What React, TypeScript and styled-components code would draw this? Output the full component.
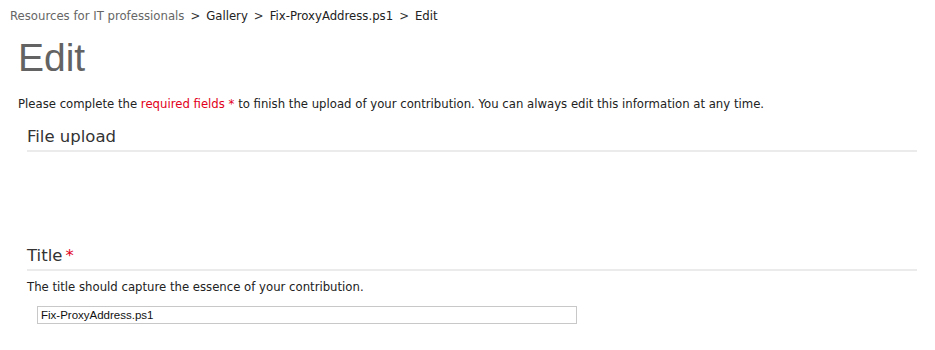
import React from "react";
import styled, { createGlobalStyle } from "styled-components";

const Global = createGlobalStyle`
  html, body { margin: 0; padding: 0; background: #fff; }
  body { font-family: "DejaVu Sans", "Liberation Sans", sans-serif; color: #222; }
`;

const Breadcrumb = styled.nav`
  display: flex;
  align-items: baseline;
  padding: 9px 0 0 10px;
  font-size: 11.7px;
  line-height: 14px;
  color: #222;
`;

const Crumb = styled.a<{ $muted?: boolean }>`
  color: ${(p) => (p.$muted ? "#666" : "#222")};
  text-decoration: none;
`;

const Sep = styled.span`
  padding: 0 6px;
  color: #333;
`;

const Main = styled.main`
  padding: 0 18px;
`;

const Heading = styled.h1`
  margin: 11px 0 0;
  font-family: "Liberation Sans", Arial, sans-serif;
  font-size: 39px;
  line-height: 48px;
  font-weight: normal;
  color: #636363;
`;

const Intro = styled.p`
  margin: 15px 0 0;
  font-size: 11.7px;
  line-height: 14px;
  color: #222;
`;

const Required = styled.span`
  color: #e2001a;
`;

const Section = styled.section<{ $gap?: number }>`
  margin: ${(p) => p.$gap ?? 0}px 0 0 9px;
`;

const SectionTitle = styled.h2`
  margin: 0;
  padding-bottom: 3px;
  font-size: 16.5px;
  line-height: 20px;
  font-weight: normal;
  color: #333;
  border-bottom: 2px solid #ebebeb;
`;

const Star = styled.span`
  color: #e2001a;
  margin-left: 3px;
`;

const Help = styled.p`
  margin: 9px 0 0;
  font-size: 11.7px;
  line-height: 14px;
  color: #222;
`;

const Input = styled.input`
  display: block;
  box-sizing: border-box;
  margin: 12px 0 0 10px;
  width: 540px;
  height: 18px;
  padding: 0 3px;
  border: 1px solid #c8c8c8;
  font-family: "Liberation Sans", Arial, sans-serif;
  font-size: 11.5px;
  color: #111;
  outline: none;
`;

export default function App() {
  return (
    <>
      <Global />
      <Breadcrumb>
        <Crumb $muted href="#">Resources for IT professionals</Crumb>
        <Sep>&gt;</Sep>
        <Crumb href="#">Gallery</Crumb>
        <Sep>&gt;</Sep>
        <Crumb href="#">Fix-ProxyAddress.ps1</Crumb>
        <Sep>&gt;</Sep>
        <Crumb href="#">Edit</Crumb>
      </Breadcrumb>
      <Main>
        <Heading>Edit</Heading>
        <Intro>
          Please complete the <Required>required fields *</Required> to finish the upload of
          your contribution. You can always edit this information at any time.
        </Intro>
        <Section $gap={16}>
          <SectionTitle>File upload</SectionTitle>
        </Section>
        <Section $gap={94}>
          <SectionTitle>
            Title<Star>*</Star>
          </SectionTitle>
          <Help>The title should capture the essence of your contribution.</Help>
          <Input defaultValue="Fix-ProxyAddress.ps1" />
        </Section>
      </Main>
    </>
  );
}
